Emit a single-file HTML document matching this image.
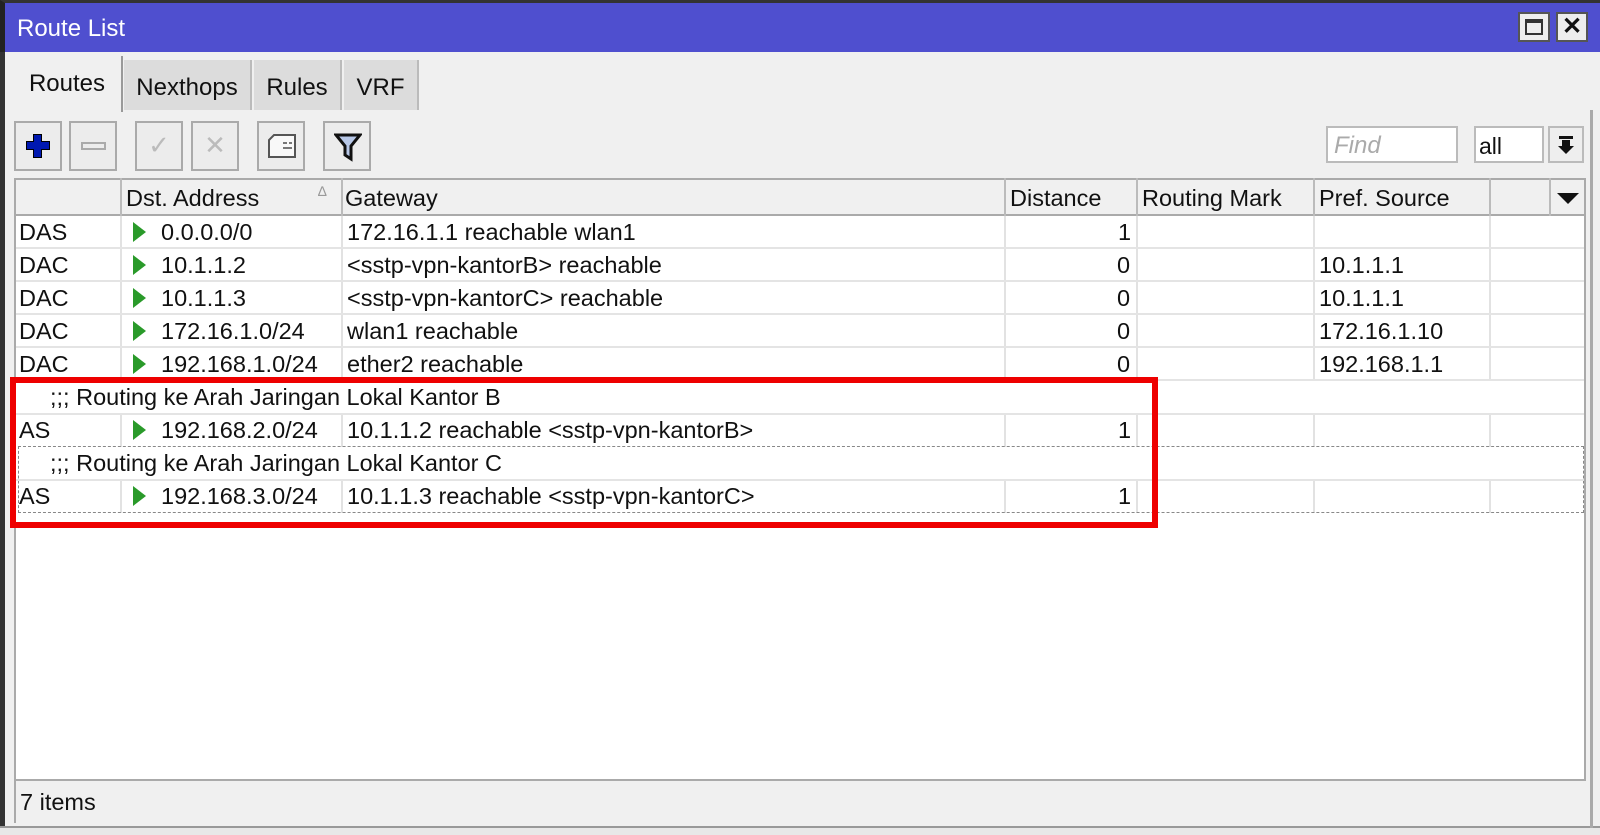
<!DOCTYPE html>
<html><head><meta charset="utf-8"><style>
*{box-sizing:border-box;margin:0;padding:0}
body{width:1600px;height:835px;background:#f0f0f0;font-family:"Liberation Sans",Arial,sans-serif;position:relative;overflow:hidden;color:#111}
.a{position:absolute}
.title{left:0;top:0;width:1600px;height:52px;background:#4f4fcf;border-left:5px solid #222;border-top:3px solid #333}
.title span{position:absolute;left:12px;top:12px;color:#fff;font-size:24px}
.wb{top:12px;width:32px;height:30px;background:#eee;border:2px solid #555}
.tab{top:60px;height:50px;font-size:24px;padding-top:14px;text-align:center;background:#dcdcdc;border-right:2px solid #bbb}
.btn{top:121px;width:48px;height:50px;border:2px solid #aaa;background:#ececec}
.tbl{left:14px;top:178px;width:1572px;height:603px;background:#fff;border:2px solid #aaa}
.hdr{left:14px;top:178px;width:1572px;height:38px;background:#f0f0f0;border:2px solid #aaa}
.vl{width:2px;background:#e2e2e2}
.hl{height:2px;background:#e4e4e4}
.t{font-size:23.5px;white-space:nowrap;letter-spacing:0}
.tri{width:0;height:0;border-top:10px solid transparent;border-bottom:10px solid transparent;border-left:13px solid #2a9a2a}
</style></head><body>
<div class="a" style="left:0;top:0;width:5px;height:835px;background:#333"></div>
<div class="a title"><span>Route List</span></div>
<div class="a wb" style="left:1518px"><div class="a" style="left:5px;top:5px;width:18px;height:16px;border:2px solid #333;border-top-width:4px"></div></div>
<div class="a wb" style="left:1556px;font-size:24px;font-weight:bold;text-align:center;line-height:26px">✕</div>
<div class="a" style="left:0;top:826px;width:1600px;height:9px;background:#e8e8e8;border-top:2px solid #999"></div>
<div class="a" style="left:1590px;top:110px;width:3px;height:718px;background:#aaa"></div>

<div class="a tab" style="left:13px;top:56px;height:56px;width:110px;background:#f0f0f0;border-right:2px solid #999">Routes</div>
<div class="a tab" style="left:124px;width:128px">Nexthops</div>
<div class="a tab" style="left:254px;width:88px">Rules</div>
<div class="a tab" style="left:344px;width:75px">VRF</div>

<div class="a btn" style="left:14px"><div class="a" style="left:10px;top:18px;width:24px;height:9px;background:#0018b0;border:1px solid #000"></div><div class="a" style="left:17px;top:11px;width:9px;height:24px;background:#0018b0;border:1px solid #000"></div><div class="a" style="left:11px;top:19px;width:22px;height:7px;background:#0018b0"></div></div>
<div class="a btn" style="left:69px"><div class="a" style="left:10px;top:19px;width:25px;height:8px;border:2px solid #aaa"></div></div>
<div class="a btn" style="left:135px;color:#bbb;font-size:26px;text-align:center;line-height:44px">✓</div>
<div class="a btn" style="left:191px;color:#bbb;font-size:26px;text-align:center;line-height:44px">✕</div>
<div class="a btn" style="left:257px"><svg class="a" style="left:8px;top:10px" width="30" height="26"><path d="M7 2 H28 V24 H2 V7 Z" fill="#f8f8f8" stroke="#555" stroke-width="2"/><path d="M16 10h4M22 10h3M16 15h9" stroke="#777" stroke-width="2"/></svg></div>
<div class="a btn" style="left:323px"><svg class="a" style="left:9px;top:8px" width="28" height="32"><path d="M2 4 H26 L17 15 V28 L11 24 V15 Z" fill="#b8c8e8" stroke="#111" stroke-width="3"/></svg></div>

<div class="a" style="left:1326px;top:126px;width:132px;height:37px;background:#fff;border:2px solid #bbb;font-size:24px;font-style:italic;color:#aaa;padding:4px 6px">Find</div>
<div class="a" style="left:1474px;top:126px;width:70px;height:37px;background:#fff;border:2px solid #bbb;font-size:23px;padding:5px 3px">all</div>
<div class="a" style="left:1548px;top:126px;width:36px;height:37px;background:#eee;border:2px solid #bbb"></div>
<div class="a" style="left:1559px;top:136px;width:14px;height:3px;background:#111"></div>
<div class="a" style="left:1562px;top:140px;width:8px;height:6px;background:#111"></div>
<div class="a" style="left:1558px;top:146px;width:0;height:0;border-left:8px solid transparent;border-right:8px solid transparent;border-top:8px solid #111"></div>

<div class="a tbl"></div>
<div class="a hdr"></div>
<div class="a vl" style="left:120px;top:178px;height:38px;background:#bbb"></div>
<div class="a vl" style="left:341px;top:178px;height:38px;background:#bbb"></div>
<div class="a vl" style="left:1004px;top:178px;height:38px;background:#bbb"></div>
<div class="a vl" style="left:1136px;top:178px;height:38px;background:#bbb"></div>
<div class="a vl" style="left:1313px;top:178px;height:38px;background:#bbb"></div>
<div class="a vl" style="left:1489px;top:178px;height:38px;background:#bbb"></div>
<div class="a vl" style="left:1549px;top:178px;height:38px;background:#bbb"></div>
<div class="a t" style="left:126px;top:185px">Dst. Address</div>
<div class="a t" style="left:318px;top:183px;font-size:14px;color:#999">∆</div>
<div class="a t" style="left:345px;top:185px">Gateway</div>
<div class="a t" style="left:1010px;top:185px">Distance</div>
<div class="a t" style="left:1142px;top:185px">Routing Mark</div>
<div class="a t" style="left:1319px;top:185px">Pref. Source</div>
<div class="a" style="left:1557px;top:193px;width:0;height:0;border-left:11px solid transparent;border-right:11px solid transparent;border-top:11px solid #111"></div>

<div class="a vl" style="left:120px;top:216px;height:164px"></div>
<div class="a vl" style="left:341px;top:216px;height:164px"></div>
<div class="a vl" style="left:1004px;top:216px;height:164px"></div>
<div class="a vl" style="left:1136px;top:216px;height:164px"></div>
<div class="a vl" style="left:1313px;top:216px;height:164px"></div>
<div class="a vl" style="left:1489px;top:216px;height:164px"></div>
<div class="a vl" style="left:120px;top:414px;height:33px"></div><div class="a vl" style="left:341px;top:414px;height:33px"></div><div class="a vl" style="left:1004px;top:414px;height:33px"></div><div class="a vl" style="left:1136px;top:414px;height:33px"></div><div class="a vl" style="left:1313px;top:414px;height:33px"></div><div class="a vl" style="left:1489px;top:414px;height:33px"></div>
<div class="a vl" style="left:120px;top:480px;height:33px"></div><div class="a vl" style="left:341px;top:480px;height:33px"></div><div class="a vl" style="left:1004px;top:480px;height:33px"></div><div class="a vl" style="left:1136px;top:480px;height:33px"></div><div class="a vl" style="left:1313px;top:480px;height:33px"></div><div class="a vl" style="left:1489px;top:480px;height:33px"></div>
<div class="a hl" style="left:16px;top:247px;width:1568px"></div>
<div class="a hl" style="left:16px;top:280px;width:1568px"></div>
<div class="a hl" style="left:16px;top:313px;width:1568px"></div>
<div class="a hl" style="left:16px;top:346px;width:1568px"></div>
<div class="a hl" style="left:16px;top:379px;width:1568px"></div>
<div class="a hl" style="left:16px;top:413px;width:1568px"></div>
<div class="a" style="left:18px;top:446px;width:1566px;height:67px;border:1px dashed #888"></div>
<div class="a hl" style="left:16px;top:479px;width:1568px"></div>

<div class="a t" style="left:19px;top:219px">DAS</div><div class="a tri" style="left:133px;top:222px"></div><div class="a t" style="left:161px;top:219px">0.0.0.0/0</div><div class="a t" style="left:347px;top:219px">172.16.1.1 reachable wlan1</div><div class="a t" style="left:1118px;top:219px">1</div>
<div class="a t" style="left:19px;top:252px">DAC</div><div class="a tri" style="left:133px;top:255px"></div><div class="a t" style="left:161px;top:252px">10.1.1.2</div><div class="a t" style="left:347px;top:252px">&lt;sstp-vpn-kantorB&gt; reachable</div><div class="a t" style="left:1117px;top:252px">0</div><div class="a t" style="left:1319px;top:252px">10.1.1.1</div>
<div class="a t" style="left:19px;top:285px">DAC</div><div class="a tri" style="left:133px;top:288px"></div><div class="a t" style="left:161px;top:285px">10.1.1.3</div><div class="a t" style="left:347px;top:285px">&lt;sstp-vpn-kantorC&gt; reachable</div><div class="a t" style="left:1117px;top:285px">0</div><div class="a t" style="left:1319px;top:285px">10.1.1.1</div>
<div class="a t" style="left:19px;top:318px">DAC</div><div class="a tri" style="left:133px;top:321px"></div><div class="a t" style="left:161px;top:318px">172.16.1.0/24</div><div class="a t" style="left:347px;top:318px">wlan1 reachable</div><div class="a t" style="left:1117px;top:318px">0</div><div class="a t" style="left:1319px;top:318px">172.16.1.10</div>
<div class="a t" style="left:19px;top:351px">DAC</div><div class="a tri" style="left:133px;top:354px"></div><div class="a t" style="left:161px;top:351px">192.168.1.0/24</div><div class="a t" style="left:347px;top:351px">ether2 reachable</div><div class="a t" style="left:1117px;top:351px">0</div><div class="a t" style="left:1319px;top:351px">192.168.1.1</div>
<div class="a t" style="left:50px;top:384px">;;; Routing ke Arah Jaringan Lokal Kantor B</div>
<div class="a t" style="left:19px;top:417px">AS</div><div class="a tri" style="left:133px;top:420px"></div><div class="a t" style="left:161px;top:417px">192.168.2.0/24</div><div class="a t" style="left:347px;top:417px">10.1.1.2 reachable &lt;sstp-vpn-kantorB&gt;</div><div class="a t" style="left:1118px;top:417px">1</div>
<div class="a t" style="left:50px;top:450px">;;; Routing ke Arah Jaringan Lokal Kantor C</div>
<div class="a t" style="left:19px;top:483px">AS</div><div class="a tri" style="left:133px;top:486px"></div><div class="a t" style="left:161px;top:483px">192.168.3.0/24</div><div class="a t" style="left:347px;top:483px">10.1.1.3 reachable &lt;sstp-vpn-kantorC&gt;</div><div class="a t" style="left:1118px;top:483px">1</div>

<div class="a" style="left:10px;top:377px;width:1148px;height:151px;border:6px solid #ee0000"></div>

<div class="a t" style="left:20px;top:789px">7 items</div>
<div class="a" style="left:14px;top:781px;width:2px;height:42px;background:#aaa"></div>
</body></html>
